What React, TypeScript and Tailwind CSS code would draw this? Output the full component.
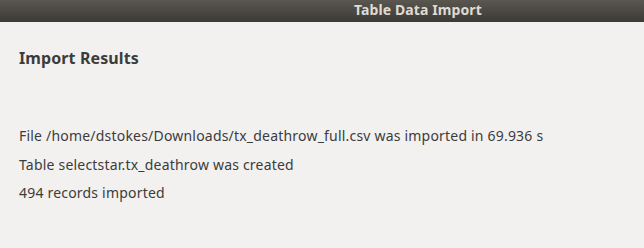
export default function App() {
  return (
    <div className="w-[644px] h-[248px] overflow-hidden bg-[#f2f1f0] flex flex-col" style={{ fontFamily: '"Noto Sans", "DejaVu Sans", sans-serif' }}>
      <div className="h-[22px] shrink-0 bg-gradient-to-b from-[#5a5650] to-[#3d3b37] flex items-start pt-[1px]">
        <div className="ml-[354px] text-[14px] font-bold tracking-[0.1px] text-[#dfdbd2] leading-[18px]">Table Data Import</div>
      </div>
      <div className="pl-[19px] text-[#3c3c3c]">
        <div className="mt-[26px] text-[16px] font-bold leading-[20px] tracking-[0.1px]">Import Results</div>
        <div className="mt-[54px] flex flex-col text-[14px] leading-[28.5px] tracking-[0.2px]">
          <div>File /home/dstokes/Downloads/tx_deathrow_full.csv was imported in 69.936 s</div>
          <div>Table selectstar.tx_deathrow was created</div>
          <div>494 records imported</div>
        </div>
      </div>
    </div>
  );
}
